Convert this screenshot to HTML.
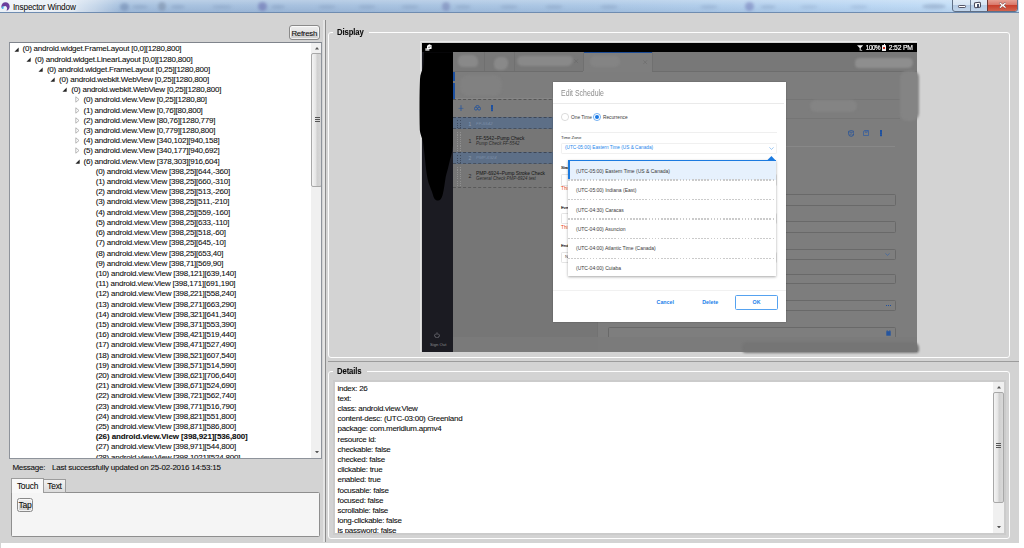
<!DOCTYPE html>
<html><head><meta charset="utf-8"><title>Inspector Window</title>
<style>
*{box-sizing:border-box;margin:0;padding:0}
html,body{width:1024px;height:548px;overflow:hidden;background:#fff}
body{font-family:"Liberation Sans",sans-serif;font-size:8px;color:#0c0c0c;-webkit-text-stroke:0.08px #0c0c0c;position:relative;letter-spacing:-0.22px}
.abs,.win *{position:absolute}
.win{position:absolute;left:0;top:0;width:1019px;height:542.5px;background:#d3d3d3;overflow:hidden}
.title{left:0;top:0;width:1019px;height:13px;background:linear-gradient(90deg,#a3bfde 0%,#a0bcdc 30%,#a6c4e4 60%,#b6d4f2 85%,#c4dff8 100%);border-bottom:1px solid #6f8cb0;overflow:hidden}
.title .vg{left:0;top:0;width:1019px;height:12px;background:linear-gradient(rgba(255,255,255,.28) 0%,rgba(255,255,255,.08) 45%,rgba(0,0,40,.04) 100%)}
.title .glow{left:0;top:0;width:120px;height:12px;background:linear-gradient(90deg,rgba(255,255,255,.8) 0%,rgba(255,255,255,.72) 55%,rgba(255,255,255,.35) 80%,rgba(255,255,255,0) 100%)}
.title .t{left:13px;top:2.8px;font-size:8.2px;color:#111;white-space:pre;letter-spacing:-0.15px;text-shadow:0 0 3px #fff,0 0 5px #fff}
.blob{border-radius:50%;filter:blur(1.5px)}
.btn{border:1px solid #8a8a8a;border-radius:3px;background:linear-gradient(#eeeeee 0%,#e4e4e4 48%,#d8d8d8 52%,#cecece 100%);text-align:center;white-space:pre;box-shadow:inset 0 0 0 1px rgba(255,255,255,.7)}
.treebox{left:9px;top:42px;width:313px;height:417px;background:#fff;border:1px solid #8e939b;border-top-color:#7f848c;overflow:hidden}
.tr{white-space:pre;line-height:11px;height:11px}
.tr.b{font-weight:bold;letter-spacing:-0.1px}
.sb{background:#f0f0f0}
.thumb{border:1px solid #a8a8a8;border-radius:2px;background:linear-gradient(90deg,#f4f4f4 0%,#e4e4e4 45%,#cfcfcf 55%,#d8d8d8 100%)}
.gb{border:1.8px solid #fdfdfd;border-radius:3px}
.gbt{transform:scaleY(1.13);font-weight:bold;background:#d3d3d3;white-space:pre;padding:0 4px;letter-spacing:-0.1px}
.dl{letter-spacing:-0.27px;left:2.5px;white-space:pre;line-height:11px;height:11px}

.dev{overflow:visible;letter-spacing:0;-webkit-text-stroke:0}
.dt{white-space:pre}
.st{transform:scaleY(1.1);-webkit-text-stroke:0.15px #fff}
.sm{filter:blur(1px)}
.grip{width:4px;background:linear-gradient(#3f4b5e,#3f4b5e) 0 0/1.3px 100% no-repeat,linear-gradient(#3f4b5e,#3f4b5e) 2.5px 0/1.3px 100% no-repeat}
.grip i{left:0;top:0;width:100%;height:100%;background:repeating-linear-gradient(0deg,transparent 0 1.1px,#5d6f87 1.1px 2.2px)}
.gb2{background:linear-gradient(#909090,#909090) 0 0/1.3px 100% no-repeat,linear-gradient(#909090,#909090) 2.5px 0/1.3px 100% no-repeat}
.gb2 i{background:repeating-linear-gradient(0deg,transparent 0 1.1px,#767676 1.1px 2.2px)}
.ib{left:186px;width:287.5px;border:1px solid #696969;border-radius:1.5px;background:#7e7e7e}
.sep{left:15px;width:207.8px;height:1.1px;background:repeating-linear-gradient(90deg,#cbcbcb 0 1.6px,transparent 1.6px 3.1px)}
.di{left:23px;font-size:5px;color:#383838;line-height:7px;white-space:pre}
.fb{font-size:5.3px;font-weight:bold;color:#1a80ea;line-height:8px}
</style></head><body>
<div class="abs" style="left:0;top:540px;width:1.2px;height:8px;background:#d3d3d3"></div>
<div class="win">
  <!-- title bar -->
  <div class="title">
    <div class="vg"></div><div class="glow"></div>
    <div class="blob" style="left:120px;top:3px;width:9px;height:8px;background:#6d86ad;opacity:.55"></div>
    <div class="blob" style="left:132px;top:5px;width:16px;height:4px;background:#8aa3c4;opacity:.6"></div>
    <div class="blob" style="left:158px;top:2px;width:8px;height:9px;background:#7c8ea8;opacity:.6"></div>
    <div class="blob" style="left:171px;top:5px;width:14px;height:4px;background:#8aa3c4;opacity:.6"></div>
    <div class="blob" style="left:212px;top:5px;width:20px;height:4px;background:#8aa3c4;opacity:.5"></div>
    <div class="blob" style="left:258px;top:2px;width:9px;height:9px;background:#6a6fb0;opacity:.6"></div>
    <div class="blob" style="left:271px;top:5px;width:14px;height:4px;background:#8aa3c4;opacity:.6"></div>
    <div class="blob" style="left:318px;top:5px;width:18px;height:4px;background:#8aa3c4;opacity:.5"></div>
    <div class="blob" style="left:358px;top:5px;width:18px;height:4px;background:#8aa3c4;opacity:.5"></div>
    <div class="blob" style="left:401px;top:5px;width:18px;height:4px;background:#8aa3c4;opacity:.5"></div>
    <div class="blob" style="left:442px;top:2px;width:8px;height:9px;background:#7079ad;opacity:.5"></div>
    <div class="blob" style="left:455px;top:5px;width:16px;height:4px;background:#8aa3c4;opacity:.5"></div>
    <div class="blob" style="left:500px;top:5px;width:18px;height:4px;background:#8aa3c4;opacity:.5"></div>
    <div class="blob" style="left:545px;top:5px;width:18px;height:4px;background:#8aa3c4;opacity:.5"></div>
    <div class="blob" style="left:600px;top:5px;width:18px;height:4px;background:#8aa3c4;opacity:.5"></div>
    <div class="blob" style="left:700px;top:5px;width:18px;height:4px;background:#8fa9ca;opacity:.5"></div>
    <div class="blob" style="left:745px;top:2px;width:9px;height:9px;background:#6d74b3;opacity:.5"></div>
    <div class="blob" style="left:760px;top:5px;width:16px;height:4px;background:#8fa9ca;opacity:.5"></div>
    <div class="blob" style="left:800px;top:5px;width:18px;height:4px;background:#9bb5d5;opacity:.5"></div>
    <div class="blob" style="left:850px;top:5px;width:18px;height:4px;background:#9bb5d5;opacity:.5"></div>
    <div class="blob" style="left:922px;top:4px;width:24px;height:5px;background:#8fa6c4;opacity:.6"></div>
    <svg class="abs" style="left:0.5px;top:2.3px" width="9" height="9" viewBox="0 0 11 11"><path d="M5.5 0.3C8.5 0.3 10.6 2.6 10.6 5.4C10.6 8.4 8.4 10.6 6.6 10.2C8.2 8.6 7.6 5.2 5 4.8C3 4.6 1.6 5.6 0.6 7.4C-0.2 3.6 2 0.3 5.5 0.3Z" fill="#6b3f9c"/><path d="M0.6 7.4C1.6 5.6 3 4.6 5 4.8C3.4 5.4 2.6 7 3 8.6C1.8 8.8 1 8.2 0.6 7.4Z" fill="#3bb4e8"/></svg>
    <div class="t">Inspector Window</div>
    <!-- window buttons -->
    <div style="left:952px;top:-2px;width:66px;height:14px;border:1px solid #5f6f85;border-radius:0 0 3px 3px;background:linear-gradient(#e2edf8 0%,#d6e4f3 48%,#b6cce5 52%,#c2d6ec 100%);overflow:hidden">
      <div style="left:17px;top:0;width:1px;height:13px;background:#6f7f95"></div>
      <div style="left:34px;top:0;width:31px;height:13px;background:linear-gradient(#e9a99c 0%,#d9786a 45%,#c8402c 50%,#d46a55 100%);border-left:1px solid #6b3a36"></div>
      <div style="left:4.6px;top:6.4px;width:8.4px;height:3px;background:#fff;border:0.8px solid #556;border-radius:1.2px"></div>
      <div style="left:21.4px;top:3px;width:7px;height:6.4px;background:#fff;border:1px solid #445;border-radius:1.4px;transform:rotate(-4deg)"></div>
      <div style="left:23.8px;top:5.4px;width:2.4px;height:2.2px;background:#4a5670"></div>
      <svg style="left:46px;top:3.4px" width="7.4" height="6.6" viewBox="0 0 9 8"><path d="M1.6 0.3L4.5 2.6L7.4 0.3L8.8 1.7L6.3 4L8.8 6.3L7.4 7.7L4.5 5.4L1.6 7.7L0.2 6.3L2.7 4L0.2 1.7Z" fill="#fff" stroke="#5a3030" stroke-width="0.6"/></svg>
    </div>
  </div>

  <!-- left pane -->
  <div class="btn" style="left:288.5px;top:25px;width:31.5px;height:15px;line-height:15px;font-size:7.8px;letter-spacing:-0.25px">Refresh</div>
  <div class="treebox">
<svg class="ar" style="left:3.6px;top:3.5px" width="5.6" height="5.6" viewBox="0 0 6 6"><path d="M5 0.5V5H0.5Z" fill="#262626"/></svg><div class="tr" style="left:12.5px;top:0.30px">(0) android.widget.FrameLayout [0,0][1280,800]</div>
<svg class="ar" style="left:15.8px;top:13.7px" width="5.6" height="5.6" viewBox="0 0 6 6"><path d="M5 0.5V5H0.5Z" fill="#262626"/></svg><div class="tr" style="left:24.7px;top:10.51px">(0) android.widget.LinearLayout [0,0][1280,800]</div>
<svg class="ar" style="left:28.0px;top:23.9px" width="5.6" height="5.6" viewBox="0 0 6 6"><path d="M5 0.5V5H0.5Z" fill="#262626"/></svg><div class="tr" style="left:36.9px;top:20.72px">(0) android.widget.FrameLayout [0,25][1280,800]</div>
<svg class="ar" style="left:40.2px;top:34.1px" width="5.6" height="5.6" viewBox="0 0 6 6"><path d="M5 0.5V5H0.5Z" fill="#262626"/></svg><div class="tr" style="left:49.1px;top:30.93px">(0) android.webkit.WebView [0,25][1280,800]</div>
<svg class="ar" style="left:52.4px;top:44.3px" width="5.6" height="5.6" viewBox="0 0 6 6"><path d="M5 0.5V5H0.5Z" fill="#262626"/></svg><div class="tr" style="left:61.3px;top:41.14px">(0) android.webkit.WebView [0,25][1280,800]</div>
<svg class="ar" style="left:64.9px;top:53.2px" width="5" height="7" viewBox="0 0 5 7"><path d="M0.8 0.8L4 3.5L0.8 6.2Z" fill="#fff" stroke="#a6a6a6" stroke-width="0.8"/></svg><div class="tr" style="left:73.5px;top:51.35px">(0) android.view.View [0,25][1280,80]</div>
<svg class="ar" style="left:64.9px;top:63.5px" width="5" height="7" viewBox="0 0 5 7"><path d="M0.8 0.8L4 3.5L0.8 6.2Z" fill="#fff" stroke="#a6a6a6" stroke-width="0.8"/></svg><div class="tr" style="left:73.5px;top:61.56px">(1) android.view.View [0,76][80,800]</div>
<svg class="ar" style="left:64.9px;top:73.7px" width="5" height="7" viewBox="0 0 5 7"><path d="M0.8 0.8L4 3.5L0.8 6.2Z" fill="#fff" stroke="#a6a6a6" stroke-width="0.8"/></svg><div class="tr" style="left:73.5px;top:71.77px">(2) android.view.View [80,76][1280,779]</div>
<svg class="ar" style="left:64.9px;top:83.9px" width="5" height="7" viewBox="0 0 5 7"><path d="M0.8 0.8L4 3.5L0.8 6.2Z" fill="#fff" stroke="#a6a6a6" stroke-width="0.8"/></svg><div class="tr" style="left:73.5px;top:81.98px">(3) android.view.View [0,779][1280,800]</div>
<svg class="ar" style="left:64.9px;top:94.1px" width="5" height="7" viewBox="0 0 5 7"><path d="M0.8 0.8L4 3.5L0.8 6.2Z" fill="#fff" stroke="#a6a6a6" stroke-width="0.8"/></svg><div class="tr" style="left:73.5px;top:92.19px">(4) android.view.View [340,102][940,158]</div>
<svg class="ar" style="left:64.9px;top:104.3px" width="5" height="7" viewBox="0 0 5 7"><path d="M0.8 0.8L4 3.5L0.8 6.2Z" fill="#fff" stroke="#a6a6a6" stroke-width="0.8"/></svg><div class="tr" style="left:73.5px;top:102.40px">(5) android.view.View [340,177][940,692]</div>
<svg class="ar" style="left:64.6px;top:115.8px" width="5.6" height="5.6" viewBox="0 0 6 6"><path d="M5 0.5V5H0.5Z" fill="#262626"/></svg><div class="tr" style="left:73.5px;top:112.61px">(6) android.view.View [378,303][916,604]</div>
<div class="tr" style="left:85.7px;top:122.82px">(0) android.view.View [398,25][644,-360]</div>
<div class="tr" style="left:85.7px;top:133.03px">(1) android.view.View [398,25][660,-310]</div>
<div class="tr" style="left:85.7px;top:143.24px">(2) android.view.View [398,25][513,-260]</div>
<div class="tr" style="left:85.7px;top:153.45px">(3) android.view.View [398,25][511,-210]</div>
<div class="tr" style="left:85.7px;top:163.66px">(4) android.view.View [398,25][559,-160]</div>
<div class="tr" style="left:85.7px;top:173.87px">(5) android.view.View [398,25][633,-110]</div>
<div class="tr" style="left:85.7px;top:184.08px">(6) android.view.View [398,25][518,-60]</div>
<div class="tr" style="left:85.7px;top:194.29px">(7) android.view.View [398,25][645,-10]</div>
<div class="tr" style="left:85.7px;top:204.50px">(8) android.view.View [398,25][653,40]</div>
<div class="tr" style="left:85.7px;top:214.71px">(9) android.view.View [398,71][569,90]</div>
<div class="tr" style="left:85.7px;top:224.92px">(10) android.view.View [398,121][639,140]</div>
<div class="tr" style="left:85.7px;top:235.13px">(11) android.view.View [398,171][691,190]</div>
<div class="tr" style="left:85.7px;top:245.34px">(12) android.view.View [398,221][558,240]</div>
<div class="tr" style="left:85.7px;top:255.55px">(13) android.view.View [398,271][663,290]</div>
<div class="tr" style="left:85.7px;top:265.76px">(14) android.view.View [398,321][641,340]</div>
<div class="tr" style="left:85.7px;top:275.97px">(15) android.view.View [398,371][553,390]</div>
<div class="tr" style="left:85.7px;top:286.18px">(16) android.view.View [398,421][519,440]</div>
<div class="tr" style="left:85.7px;top:296.39px">(17) android.view.View [398,471][527,490]</div>
<div class="tr" style="left:85.7px;top:306.60px">(18) android.view.View [398,521][607,540]</div>
<div class="tr" style="left:85.7px;top:316.81px">(19) android.view.View [398,571][514,590]</div>
<div class="tr" style="left:85.7px;top:327.02px">(20) android.view.View [398,621][706,640]</div>
<div class="tr" style="left:85.7px;top:337.23px">(21) android.view.View [398,671][524,690]</div>
<div class="tr" style="left:85.7px;top:347.44px">(22) android.view.View [398,721][562,740]</div>
<div class="tr" style="left:85.7px;top:357.65px">(23) android.view.View [398,771][516,790]</div>
<div class="tr" style="left:85.7px;top:367.86px">(24) android.view.View [398,821][551,800]</div>
<div class="tr" style="left:85.7px;top:378.07px">(25) android.view.View [398,871][586,800]</div>
<div class="tr b" style="left:85.7px;top:388.28px">(26) android.view.View [398,921][536,800]</div>
<div class="tr" style="left:85.7px;top:398.49px">(27) android.view.View [398,971][544,800]</div>
<div class="tr" style="left:85.7px;top:408.70px">(28) android.view.View [398,1021][524,800]</div>
    <div class="sb" style="left:301px;top:0;width:11px;height:415px"></div>
    <svg style="left:304.6px;top:4px" width="4" height="2.5" viewBox="0 0 5 3"><path d="M2.5 0L5 3H0Z" fill="#555"/></svg>
    <div class="thumb" style="left:301.2px;top:10px;width:10.6px;height:134px"></div>
    <div style="left:304.5px;top:74px;width:5px;height:1px;background:#555;box-shadow:0 2px 0 #555,0 4px 0 #555"></div>
    <svg style="left:304.6px;top:407.5px" width="4" height="2.5" viewBox="0 0 5 3"><path d="M0 0H5L2.5 3Z" fill="#555"/></svg>
  </div>
  <div class="abs" style="left:12.4px;top:462px;white-space:pre;line-height:11px">Message:</div>
  <div class="abs" style="left:52px;top:462px;white-space:pre;line-height:11px">Last successfully updated on 25-02-2016 14:53:15</div>
  <!-- tabs -->
  <div style="left:11px;top:492px;width:309px;height:45px;background:#f5f5f5;border:1px solid #8e8e8e;border-radius:0 1.5px 1.5px 1.5px"></div>
  <div style="left:43px;top:479.3px;width:23px;height:13.7px;background:linear-gradient(#f2f2f2,#dcdcdc);border:1px solid #9c9c9c;line-height:13px;text-align:center;font-size:8.4px">Text</div>
  <div style="left:11px;top:478px;width:33px;height:15px;background:#f8f8f8;border:1px solid #9c9c9c;border-bottom:0;line-height:14px;text-align:center;font-size:8.4px">Touch</div>
  <div class="btn" style="left:17px;top:497.5px;width:16px;height:14.5px;line-height:13.5px;font-size:8.6px;letter-spacing:-0.3px;border-radius:2.5px">Tap</div>

  <!-- splitter -->
  <div style="left:323px;top:20px;width:2px;height:522px;background:#e4e4e4"></div>
  <div style="left:325px;top:20px;width:1px;height:522px;background:#8c8c8c"></div>

  <!-- Display -->
  <div class="gb" style="left:328px;top:32px;width:682px;height:325.5px"></div>
  <div class="gbt" style="left:333px;top:27.4px;line-height:11px;font-size:7.7px;padding-right:5px">Display</div>
  <div style="left:328px;top:361.4px;width:691px;height:1px;background:#9c9c9c"></div>
  <div style="left:420.4px;top:41.2px;width:496.6px;height:311px;border-top:1.6px solid #e9e9e9;border-left:1.6px solid #e4e4e4"></div>
  <div class="dev" style="left:422px;top:43px;width:495px;height:309px;background:#7d7d7d">
    <!-- right panel base -->
    <div style="left:31px;top:9px;width:464px;height:300px;background:#7d7d7d"></div>
    <!-- left list panel -->
    <div style="left:31px;top:28px;width:145px;height:266px;background:#767676"></div>
    <div style="left:31px;top:294px;width:145px;height:15px;background:#7a7a7a"></div>
    <div style="left:175.4px;top:56px;width:1px;height:238px;background:#727272"></div>
    <!-- tab bar -->
    <div style="left:31px;top:9px;width:464px;height:19.5px;background:#787878;border-bottom:1px solid #6d6d6d"></div>
    <div style="left:161.3px;top:9px;width:68.7px;height:19.5px;background:#7e7e7e;border-top:1px solid #1c4c96"></div>
    <div style="left:61.5px;top:9px;width:1px;height:19px;background:#707070"></div>
    <div style="left:92.4px;top:9px;width:1px;height:19px;background:#707070"></div>
    <div style="left:161px;top:9px;width:1px;height:19px;background:#707070"></div>
    <div style="left:230px;top:9px;width:1px;height:19px;background:#707070"></div>
    <div class="sm" style="left:36px;top:12px;width:20px;height:12px;background:#898989;border-radius:5px 6px 4px 5px"></div>
    <div class="sm" style="left:72px;top:13.5px;width:14px;height:13px;background:#898989;border-radius:6px 5px 6px 5px"></div>
    <div class="sm" style="left:95px;top:12.5px;width:56px;height:10px;background:#898989;border-radius:5px 4px 6px 5px"></div>
    <div class="sm" style="left:168px;top:13px;width:30px;height:11px;background:#848484;border-radius:5px"></div>
    <div class="sm" style="left:433px;top:14.5px;width:58px;height:10px;background:#8e8e8e;border-radius:5px 5px 6px 4px"></div>
    <svg style="left:152.3px;top:16.3px" width="4.4" height="4.4" viewBox="0 0 4.4 4.4"><path d="M0.3 0.3L4.1 4.1M4.1 0.3L0.3 4.1" stroke="#686868" stroke-width="0.55"/></svg>
    <svg style="left:221.3px;top:17.3px" width="4.4" height="4.4" viewBox="0 0 4.4 4.4"><path d="M0.3 0.3L4.1 4.1M4.1 0.3L0.3 4.1" stroke="#686868" stroke-width="0.55"/></svg>
    <!-- left header area -->
    <div style="left:31px;top:29px;width:145px;height:27px;background:#7d7d7d"></div>
    <div class="sm" style="left:38px;top:32px;width:42px;height:21px;background:#818181;border-radius:8px"></div>
    <div style="left:31px;top:29px;width:2.2px;height:8.6px;background:#1d50a0"></div>
    <div style="left:31px;top:39.6px;width:2.2px;height:16.4px;background:#1d50a0"></div>
    <div style="left:31px;top:56px;width:144.4px;height:18.6px;background:#7b7b7b;border-top:1px dashed #565656"></div>
    <div style="left:33.2px;top:55px;width:142px;height:1px;background:#868686"></div>
    <!-- toolbar icons -->
    <svg style="left:36px;top:61.6px" width="6" height="6.8" viewBox="0 0 6 6.8"><path d="M3 0.2V6.6" stroke="#1d50a0" stroke-width="0.75"/><path d="M0.5 3.4H5.5" stroke="#1d50a0" stroke-width="0.5"/></svg>
    <svg style="left:51.5px;top:62px" width="7" height="6" viewBox="0 0 7 6"><circle cx="1.9" cy="3.6" r="1.5" fill="none" stroke="#1d50a0" stroke-width="0.8"/><circle cx="5.1" cy="3.6" r="1.5" fill="none" stroke="#1d50a0" stroke-width="0.8"/><path d="M1.6 2.2L2.4 0.6H4.6L5.4 2.2" fill="none" stroke="#1d50a0" stroke-width="0.7"/></svg>
    <div style="left:69.2px;top:62px;width:1.5px;height:1.5px;background:#1d50a0;box-shadow:0 2.1px 0 #1d50a0,0 4.2px 0 #1d50a0"></div>
    <!-- row 1 -->
    <div style="left:31px;top:74.2px;width:144.4px;height:11.8px;background:#5d6f87;border-top:1px dashed #3e4756;border-bottom:1px dashed #47515f"></div>
    <div class="grip gh" style="left:35px;top:75.8px;height:9px"><i></i></div>
    <div class="dt" style="left:46.4px;top:76.6px;font-size:5px;color:#8b9bb0;line-height:8px">1</div>
    <div class="dt" style="left:54px;top:76.6px;font-size:4.4px;color:#7a8ca5;line-height:8px;font-style:italic">FF-5542</div>
    <div class="grip gb2" style="left:35px;top:88px;height:20px"><i></i></div>
    <div class="dt" style="left:46.4px;top:94px;font-size:5.2px;color:#2a2a2a;line-height:8px">1</div>
    <div class="dt" style="left:54px;top:92.1px;font-size:4.8px;color:#1c1c1c;line-height:7px;-webkit-text-stroke:0.04px #1c1c1c">FF-5542~Pump Check</div>
    <div class="dt" style="left:54px;top:97.2px;font-size:4.45px;color:#2a2a2a;line-height:7px;font-style:italic">Pump Check FF-5542</div>
    <!-- row 2 -->
    <div style="left:31px;top:109px;width:144.4px;height:12.3px;background:#5d6f87;border-top:1px dashed #3e4756;border-bottom:1px dashed #47515f"></div>
    <div class="grip gh" style="left:35px;top:110.6px;height:9px"><i></i></div>
    <div class="dt" style="left:46.4px;top:111.2px;font-size:5px;color:#8b9bb0;line-height:8px">2</div>
    <div class="dt" style="left:54px;top:111.2px;font-size:4.4px;color:#7a8ca5;line-height:8px;font-style:italic">PMP-6924</div>
    <div class="grip gb2" style="left:35px;top:122.6px;height:20px"><i></i></div>
    <div class="dt" style="left:46.4px;top:128.6px;font-size:5.2px;color:#2a2a2a;line-height:8px">2</div>
    <div class="dt" style="left:54px;top:126.8px;font-size:4.86px;color:#1c1c1c;line-height:7px;-webkit-text-stroke:0.04px #1c1c1c">PMP-6924~Pump Stroke Check</div>
    <div class="dt" style="left:54px;top:131.9px;font-size:4.42px;color:#2a2a2a;line-height:7px;font-style:italic">General Check PMP-6924 test</div>
    <div style="left:31px;top:143.6px;width:144.4px;height:1px;border-top:1px dashed #5a5a5a"></div>

    <!-- right panel details -->
    <div style="left:176px;top:55.5px;width:302px;height:1px;background:#757575"></div>
    <div style="left:176px;top:75px;width:302px;height:1px;background:#757575"></div>
    <div class="sm" style="left:388px;top:57px;width:47px;height:12px;background:#848484;border-radius:6px"></div>
    <div class="sm" style="left:478px;top:28px;width:18.5px;height:50px;background:#848484;border-radius:7px 6px 8px 7px"></div>
    <div style="left:176px;top:103px;width:297.4px;height:1px;background:#888"></div>
    <!-- right toolbar icons -->
    <svg style="left:426px;top:86.8px" width="6.4" height="6.8" viewBox="0 0 6.4 6.8"><path d="M0.6 1.3Q3.2 0 5.8 1.3V3.6A2.6 2.7 0 0 1 0.6 3.6Z" fill="none" stroke="#1e4f9c" stroke-width="0.8"/><path d="M1.8 4.6Q3.2 3 4.6 4.6M1.6 2.4H4.8" fill="none" stroke="#1e4f9c" stroke-width="0.6"/></svg>
    <svg style="left:441px;top:87px" width="6" height="6" viewBox="0 0 6 6"><path d="M0.5 1.4V5.5H5.5V0.5H1.6ZM2 0.5V2.2H4.2V0.5" fill="none" stroke="#2c5aa4" stroke-width="0.7"/></svg>
    <div style="left:458.4px;top:87.2px;width:1.5px;height:1.5px;background:#1d50a0;box-shadow:0 2.1px 0 #1d50a0,0 4.2px 0 #1d50a0"></div>
    <!-- input boxes -->
    <div class="ib" style="top:151.2px;height:11.8px"></div>
    <div class="ib" style="top:178.2px;height:11.6px"></div>
    <div class="ib" style="top:205.6px;height:11px"></div>
    <div class="ib" style="top:230.7px;height:10.8px"></div>
    <div class="ib" style="top:257px;height:11.2px"></div>
    <div class="ib" style="top:283.8px;height:12px"></div>
    <svg style="left:463px;top:210px" width="5" height="3" viewBox="0 0 5 3"><path d="M0.4 0.4L2.5 2.4L4.6 0.4" fill="none" stroke="#3a66a8" stroke-width="0.7"/></svg>
    <div style="left:464px;top:262px;width:1.2px;height:1.2px;background:#1d50a0;box-shadow:2px 0 0 #1d50a0,4px 0 0 #1d50a0"></div>
    <svg style="left:463.5px;top:286.5px" width="5" height="6" viewBox="0 0 5 6"><path d="M0.3 1.2H4.7V5.7H0.3Z" fill="#25559f"/><path d="M1.2 0.2V1.5M3.8 0.2V1.5" stroke="#25559f" stroke-width="0.8"/></svg>
    <!-- bottom scribble -->
    <div style="left:176px;top:294px;width:319px;height:15px;background:#7b7b7b"></div>
    <div class="sm" style="left:320px;top:298.5px;width:177px;height:11.5px;background:#757575;border-radius:5px 6px 3px 4px"></div>

    <!-- status bar -->
    <div style="left:0;top:0;width:495px;height:9px;background:#000"></div>
    <svg style="left:3px;top:0.6px" width="8" height="7.4" viewBox="0 0 8 7.4"><path d="M0.3 4.2H4.4V6.8H0.3Z" fill="#bdbdbd"/><path d="M2.4 1.4L4.3 0.2L6.6 1.3V4.6Q6.6 5.1 6.1 5.1H2.6Q2 5.1 2 4.5V2Z" fill="#fff"/><path d="M3.2 3.1L4 3.7L5.6 2.2" fill="none" stroke="#222" stroke-width="0.6"/></svg>
    <svg style="left:435px;top:1.8px" width="6.4" height="6" viewBox="0 0 6.4 6"><path d="M0 0.2H6.4L3.7 3V5.8H2.7V3Z" fill="#eee"/><path d="M3.9 4.4L5.6 5.8H3.9Z" fill="#ddd"/></svg>
    <div class="dt st" style="left:443.8px;top:0.9px;font-size:6.3px;color:#fff;line-height:8px;letter-spacing:-0.4px">100%</div>
    <div style="left:460.2px;top:2px;width:4.2px;height:5.8px;background:#f2f2f2;border-radius:0.6px"></div>
    <div style="left:461.6px;top:1.2px;width:1.6px;height:1px;background:#f2f2f2"></div>
    <div style="left:461.3px;top:3.6px;width:2px;height:2.8px;background:#d02a1a"></div>
    <div class="dt st" style="left:466.8px;top:0.9px;font-size:6.8px;color:#fff;line-height:8px;letter-spacing:-0.2px">2:52 PM</div>

    <!-- sidebar -->
    <div style="left:0;top:9px;width:31px;height:300px;background:#1b1b22"></div>
    <svg style="left:-4px;top:8px;overflow:visible" width="40" height="152" viewBox="-4 8 40 152"><path d="M2 9.2H31V102C30.5 110 28 116 27 121C26 126 24.5 130 23.7 134C22.5 141 22 147 20.6 152C19.5 156 18 157.5 16 157.5C13.5 157.5 12 156 11 152C9.5 147 8 144 6.6 140C5 134 4.2 128 3.5 121C2.8 113 2 106 1 99C0 94 -2 91 -2.2 87C-2.6 70 -2.6 50 -2 36C-1.8 31 0 28 1 25C1.8 20 1.6 14 2 9.2Z" fill="#000"/></svg>
    <svg style="left:12.2px;top:289px" width="6" height="6.4" viewBox="0 0 6 6.4"><path d="M1.7 1.7A2.3 2.3 0 1 0 4.3 1.7M3 0.4V2.8" fill="none" stroke="#a2a2a8" stroke-width="0.55"/></svg>
    <div class="dt" style="left:8px;top:298.5px;font-size:4.2px;color:#8d8d93;line-height:6px">Sign Out</div>

    <!-- dialog -->
    <div class="dlg" style="left:131px;top:39.3px;width:232.5px;height:239.7px;background:#fff;box-shadow:0 0 1.5px rgba(0,0,0,.3)">
      <div class="dt" style="left:8px;top:5.5px;font-size:8.2px;color:#8c8c8c;line-height:11px;transform-origin:0 0;transform:scaleX(.85)">Edit Schedule</div>
      <div style="left:0;top:21px;width:230.5px;height:1px;background:#eaeaea"></div>
      <svg style="left:7.8px;top:30.7px" width="8" height="8" viewBox="0 0 8 8"><circle cx="4" cy="4" r="3.6" fill="#fff" stroke="#c4c4c4" stroke-width="0.6"/></svg>
      <div class="dt" style="left:18px;top:32px;font-size:4.8px;color:#3a3a3a;line-height:7px">One Time</div>
      <svg style="left:39.6px;top:30.7px" width="8" height="8" viewBox="0 0 8 8"><circle cx="4" cy="4" r="3.55" fill="#fff" stroke="#3f93ee" stroke-width="0.7"/><circle cx="4" cy="4" r="2" fill="#1878e6"/></svg>
      
      <div class="dt" style="left:50px;top:32px;font-size:4.75px;color:#3a3a3a;line-height:7px">Recurrence</div>
      <div style="left:8px;top:49.5px;width:216.3px;height:1px;background:#efefef"></div>
      <div class="dt" style="left:8px;top:52.3px;font-size:4.4px;color:#333;line-height:6px;letter-spacing:-0.05px">Time Zone</div>
      <div style="left:8px;top:60.4px;width:216.3px;height:11.5px;border:1px solid #f0f0f0;border-radius:1.2px;background:#fff"></div>
      <div class="dt" style="left:12px;top:61.6px;font-size:4.7px;color:#1e86ec;line-height:7px">(UTC-05:00) Eastern Time (US &amp; Canada)</div>
      <svg style="left:215.6px;top:65px" width="5" height="3" viewBox="0 0 5 3"><path d="M0.4 0.4L2.5 2.4L4.6 0.4" fill="none" stroke="#5aa2ea" stroke-width="0.6"/></svg>
      <!-- fields behind dropdown -->
      <div class="dt" style="left:8px;top:83.2px;font-size:4.3px;color:#1a1a1a;line-height:6px;-webkit-text-stroke:0.15px #1a1a1a">Start Date</div>
      <div style="left:8px;top:91.7px;width:216.3px;height:12px;border:1px solid #e4e4e4;border-radius:1.2px"></div>
      <div class="dt" style="left:8px;top:104px;font-size:4.8px;color:#e8481c;line-height:6px">This field is required</div>
      <div class="dt" style="left:8px;top:122.4px;font-size:4.3px;color:#1a1a1a;line-height:6px;-webkit-text-stroke:0.15px #1a1a1a">Every</div>
      <div style="left:8px;top:130.4px;width:216.3px;height:11.8px;border:1px solid #e4e4e4;border-radius:1.2px"></div>
      <div class="dt" style="left:8px;top:143.2px;font-size:4.8px;color:#e8481c;line-height:6px">This field is required</div>
      <div class="dt" style="left:8px;top:161.2px;font-size:4.3px;color:#1a1a1a;line-height:6px;-webkit-text-stroke:0.15px #1a1a1a">End</div>
      <div style="left:8px;top:169.7px;width:216.3px;height:11px;border:1px solid #e4e4e4;border-radius:1.2px"></div>
      <div class="dt" style="left:12px;top:172px;font-size:4.4px;color:#555;line-height:6px">Never</div>
      <!-- dropdown -->
      <div style="left:15px;top:78.2px;width:207.8px;height:116px;background:#fff;box-shadow:0 1px 2.5px rgba(0,0,0,.35);border-top:1px solid #1c7be0"></div>
      <svg style="left:213.7px;top:73.8px" width="8.8" height="4.6" viewBox="0 0 8.8 4.6"><path d="M0 4.6L4.4 0L8.8 4.6Z" fill="#1c7be0"/></svg>
      <div style="left:15px;top:78.8px;width:207.8px;height:18.6px;background:#e6f1fd;border-left:2px solid #1c7be0"></div>
      <div class="sep" style="top:97.2px"></div>
      <div class="sep" style="top:117px"></div>
      <div class="sep" style="top:136.2px"></div>
      <div class="sep" style="top:155.8px"></div>
      <div class="sep" style="top:175.4px"></div>
      <div class="di" style="top:85.7px">(UTC-05:00) Eastern Time (US &amp; Canada)</div>
      <div class="di" style="top:105px">(UTC-05:00) Indiana (East)</div>
      <div class="di" style="top:124.3px">(UTC-04:30) Caracas</div>
      <div class="di" style="top:143.5px">(UTC-04:00) Asuncion</div>
      <div class="di" style="top:162.9px">(UTC-04:00) Atlantic Time (Canada)</div>
      <div class="di" style="top:182.5px">(UTC-04:00) Cuiaba</div>
      <!-- footer -->
      <div style="left:0;top:207.5px;width:232.5px;height:1px;background:#f1f1f1"></div>
      <div class="dt fb" style="left:103.6px;top:215.7px">Cancel</div>
      <div class="dt fb" style="left:149.3px;top:215.7px">Delete</div>
      <div style="left:182px;top:212.7px;width:43px;height:14.7px;border:1px solid #55a2f0;border-radius:1.6px"></div>
      <div class="dt fb" style="left:182px;top:215.7px;width:43px;text-align:center">OK</div>
    </div>
  </div>

  <!-- Details -->
  <div class="gb" style="left:328px;top:370.5px;width:682px;height:168.5px"></div>
  <div class="gbt" style="left:333px;top:365.5px;line-height:11px;font-size:7.7px;padding-right:5px">Details</div>
  <div style="left:333px;top:380px;width:673px;height:155px;background:#cbcbcb"></div>
  <div style="left:335px;top:382px;width:669px;height:151px;background:#fff;overflow:hidden">
<div class="dl" style="top:0.50px">index: 26</div>
<div class="dl" style="top:10.71px">text:</div>
<div class="dl" style="top:20.92px">class: android.view.View</div>
<div class="dl" style="top:31.13px">content-desc: (UTC-03:00) Greenland</div>
<div class="dl" style="top:41.34px">package: com.meridium.apmv4</div>
<div class="dl" style="top:51.55px">resource id:</div>
<div class="dl" style="top:61.76px">checkable: false</div>
<div class="dl" style="top:71.97px">checked: false</div>
<div class="dl" style="top:82.18px">clickable: true</div>
<div class="dl" style="top:92.39px">enabled: true</div>
<div class="dl" style="top:102.60px">focusable: false</div>
<div class="dl" style="top:112.81px">focused: false</div>
<div class="dl" style="top:123.02px">scrollable: false</div>
<div class="dl" style="top:133.23px">long-clickable: false</div>
<div class="dl" style="top:143.44px">is password: false</div>
    <div class="sb" style="left:658px;top:0;width:11px;height:151px"></div>
    <svg style="left:661.5px;top:4px" width="4" height="2.5" viewBox="0 0 5 3"><path d="M2.5 0L5 3H0Z" fill="#555"/></svg>
    <div class="thumb" style="left:658px;top:10px;width:11px;height:111px"></div>
    <div style="left:661px;top:61px;width:5px;height:1px;background:#555;box-shadow:0 2px 0 #555,0 4px 0 #555"></div>
    <svg style="left:661.5px;top:143.5px" width="4" height="2.5" viewBox="0 0 5 3"><path d="M0 0H5L2.5 3Z" fill="#555"/></svg>
  </div>
</div>
</body></html>
